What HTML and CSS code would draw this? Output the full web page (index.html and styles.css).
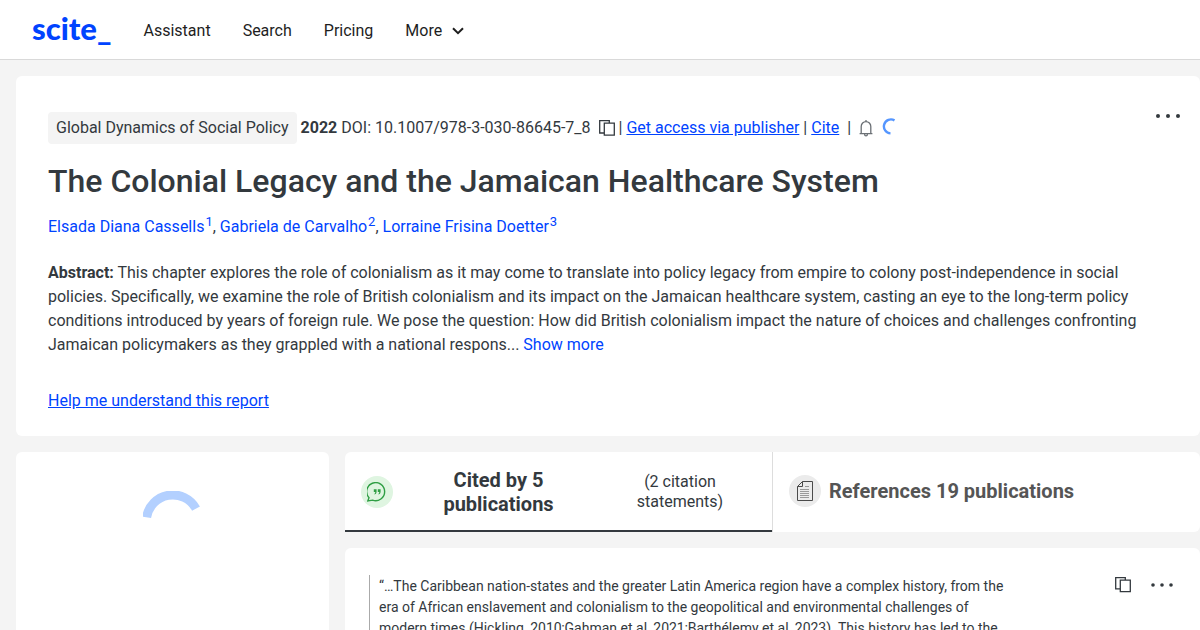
FILE: index.html
```html
<!DOCTYPE html>
<html lang="en">
<head>
  <meta charset="UTF-8" />
  <meta name="viewport" content="width=device-width, initial-scale=1.0"/>
  <title>The Colonial Legacy and the Jamaican Healthcare System</title>
  <link rel="stylesheet" href="styles.css">
</head>
<body>

  <!-- HEADER -->
  <header class="header">
    <a href="#" class="logo">scite_</a>
    <nav class="nav">
      <a href="#">Assistant</a>
      <a href="#">Search</a>
      <a href="#">Pricing</a>
      <button type="button" class="more">More
        <svg width="12" height="8" viewBox="0 0 12 8" fill="none" stroke="currentColor" stroke-width="2"><path d="M1 1.2l5 5 5-5"/></svg>
      </button>
    </nav>
  </header>

  <main class="main">

    <!-- PAPER -->
    <section class="card paper">
      <div class="meta">
        <span class="journal">Global Dynamics of Social Policy</span>
        <strong>2022</strong>
        <span>DOI: 10.1007/978-3-030-86645-7_8</span>
        <button type="button" class="icon-btn copy" aria-label="Copy DOI">
          <svg width="16" height="16" viewBox="0 0 16 16" fill="none" stroke="currentColor" stroke-width="1.3"><path d="M4.8 13H.7V.7h9.6V3M5.3 3.2h10v12h-10z"/></svg>
        </button>
        <span>|</span>
        <a href="#">Get access via publisher</a>
        <span>|</span>
        <a href="#">Cite</a>
        <span class="last-bar">|</span>
        <button type="button" class="icon-btn bell" aria-label="Notify me">
          <svg width="14" height="17" viewBox="0 0 14 17" fill="none" stroke="#6b7075" stroke-width="1.3"><path d="M7 0v1.6M.6 13.6h12.8M2.2 13.6V6.6a4.8 5 0 0 1 9.6 0v7M5.6 14.2a1.4 1.6 0 0 0 2.8 0"/></svg>
        </button>
        <svg class="spinner-small" width="16" height="20" viewBox="0 0 16 20" fill="none" stroke="#5596ff" stroke-width="2.4"><path d="M13.5 2.4A7 7 0 1 0 9.5 15.4"/></svg>
        <button type="button" class="icon-btn dots" aria-label="More options">
          <svg width="24" height="4" viewBox="0 0 24 4" fill="currentColor"><circle cx="2" cy="2" r="2"/><circle cx="12" cy="2" r="2"/><circle cx="22" cy="2" r="2"/></svg>
        </button>
      </div>
      <h1>The Colonial Legacy and the Jamaican Healthcare System</h1>
      <p class="authors"><a href="#">Elsada Diana Cassells<sup>1</sup></a>, <a href="#">Gabriela de Carvalho<sup>2</sup></a>, <a href="#">Lorraine Frisina Doetter<sup>3</sup></a></p>
      <p class="abstract"><strong>Abstract:</strong> This chapter explores the role of colonialism as it may come to translate into policy legacy from empire to colony post-independence in social policies. Specifically, we examine the role of British colonialism and its impact on the Jamaican healthcare system, casting an eye to the long-term policy conditions introduced by years of foreign rule. We pose the question: How did British colonialism impact the nature of choices and challenges confronting Jamaican policymakers as they grappled with a national respons... <button type="button" class="show-more">Show more</button></p>
      <a href="#" class="help">Help me understand this report</a>
    </section>

    <div class="columns">

      <!-- FILTERS (loading) -->
      <aside class="card sidebar">
        <svg width="60" height="60" viewBox="0 0 60 60" fill="none" stroke="#b3d0ff" stroke-width="9"><path d="M3.6 26.4A26.5 26.5 0 0 1 53 17.6"/></svg>
      </aside>

      <!-- CITATIONS -->
      <div class="results">
        <div class="card tabs">
          <button type="button" class="tab active">
            <span class="badge green">
              <svg width="20" height="20" viewBox="0 0 20 20" fill="none" stroke="#2f9e44" stroke-width="1.4"><path d="M.8 18.9l1.2-3.2A9 9 0 1 1 5.6 18.1L.8 18.9z"/><path fill="#2f9e44" stroke="none" d="M6.8 7.2h2.8v2.4c0 1.6-.7 2.5-1.9 3l-.3-.7c.6-.4.9-.9.9-1.8H6.8zM10.8 7.2h2.8v2.4c0 1.6-.7 2.5-1.9 3l-.3-.7c.6-.4.9-.9.9-1.8h-1.5z"/></svg>
            </span>
            <span class="tab-title">Cited by 5 publications</span>
            <span class="tab-note">(2 citation statements)</span>
          </button>
          <button type="button" class="tab">
            <span class="badge">
              <svg width="16" height="20" viewBox="0 0 16 20" fill="none" stroke="#4a4a4a"><path d="M5.5.5h10v19H.5v-14zM5.5.5v5h-5"/><path stroke="#999" d="M8 5.5h4M3 8.5h9M3 10.5h9M3 12.5h9M3 14.5h9M3 16.5h9"/></svg>
            </span>
            <span class="tab-title">References 19 publications</span>
          </button>
        </div>

        <article class="card citation">
          <blockquote>“…The Caribbean nation-states and the greater Latin America region have a complex history, from the era of African enslavement and colonialism to the geopolitical and environmental challenges of modern times (Hickling, 2010;Gahman et al, 2021;Barthélemy et al, 2023). This history has led to the</blockquote>
          <div class="actions">
            <button type="button" class="icon-btn" aria-label="Copy statement">
              <svg width="16" height="16" viewBox="0 0 16 16" fill="none" stroke="currentColor" stroke-width="1.3"><path d="M4.8 11.8H.7V.7h9.6V3M5.3 3.2h10v11.5h-10z"/></svg>
            </button>
            <button type="button" class="icon-btn" aria-label="More options">
              <svg width="22" height="4" viewBox="0 0 22 4" fill="currentColor"><circle cx="2" cy="2" r="1.8"/><circle cx="11" cy="2" r="1.8"/><circle cx="20" cy="2" r="1.8"/></svg>
            </button>
          </div>
        </article>
      </div>
    </div>
  </main>

</body>
</html>
```

FILE: styles.css
```css
* {
  box-sizing: border-box;
}

body {
  font-family: Roboto, "Liberation Sans", sans-serif;
  font-size: 16px;
  line-height: 24px;
  color: #33393e;
  background: #f4f4f4;
  display: flex;
  flex-direction: column;
  height: 100vh;
  margin: 0;
  overflow: hidden;
}

button {
  font: inherit;
  color: inherit;
  background: none;
  border: none;
  padding: 0;
  cursor: pointer;
}

a {
  color: #0043ff;
}

svg {
  display: block;
}

.header {
  display: flex;
  align-items: center;
  flex: none;
  gap: 32px;
  height: 60px;
  padding: 0 32px;
  background: #fff;
  border-bottom: 1px solid #d9d9d9;
}

.logo {
  font-family: Lato, sans-serif;
  font-size: 31px;
  font-weight: 900;
  padding-bottom: 4px;
  text-decoration: none;
}

.nav {
  display: flex;
  gap: 32px;
  padding-top: 2px;
  color: #1e1e1e;
}

.nav a {
  color: inherit;
  text-decoration: none;
}

.more {
  display: flex;
  align-items: center;
  gap: 10px;
}

.main {
  display: flex;
  flex-direction: column;
  flex: 1;
  gap: 16px;
  min-height: 0;
  padding: 16px 0 0 16px;
}

.card {
  background: #fff;
  border-radius: 6px;
}

.paper {
  flex: none;
  padding: 36px 20px 23px 32px;
}

.meta {
  display: flex;
  align-items: center;
  gap: 4px;
  height: 32px;
}

.journal {
  padding: 4px 8px;
  background: #f4f4f4;
  border-radius: 4px;
}

.icon-btn {
  flex: none;
}

.copy {
  margin-left: 4px;
}

.last-bar {
  margin: 0 4px;
}

.spinner-small {
  margin: 0 4px;
}

.dots {
  align-self: flex-start;
  margin-left: auto;
  padding-top: 2px;
}

h1 {
  font-size: 32px;
  font-weight: 500;
  line-height: 40px;
  margin: 17px 0 14px;
}

.authors {
  margin: 0;
}

.authors a {
  text-decoration: none;
}

sup {
  font-size: 13px;
  line-height: 0;
  margin-left: 1px;
}

.abstract {
  margin: 22px 32px 32px 0;
}

.show-more {
  color: #0043ff;
}

.help {
  display: block;
  width: fit-content;
}

.columns {
  display: flex;
  flex: 1;
  gap: 16px;
  min-height: 0;
}

.sidebar {
  flex: 0 0 313px;
  padding: 39px 0;
  border-radius: 6px 6px 0 0;
}

.sidebar svg {
  margin: 0 auto;
}

.results {
  display: flex;
  flex-direction: column;
  flex: 1;
  gap: 16px;
}

.tabs {
  display: flex;
  flex: none;
  height: 80px;
  border-bottom-left-radius: 0;
  overflow: hidden;
}

.tab {
  display: flex;
  align-items: center;
  flex: 1;
  gap: 8px;
  padding: 0 16px;
  color: #555;
}

.tab + .tab {
  padding-bottom: 2px;
  border-left: 1px solid #ddd;
}

.tab.active {
  padding-top: 2px;
  color: #33393e;
  border-bottom: 2px solid #33393e;
}

.badge {
  display: flex;
  align-items: center;
  justify-content: center;
  flex: none;
  width: 32px;
  height: 32px;
  background: #ebebeb;
  border-radius: 50%;
}

.badge.green {
  background: #dff5e1;
}

.tab-title {
  font-size: 20px;
  font-weight: 700;
}

.active .tab-title {
  flex: 1;
  padding: 0 32px;
}

.tab-note {
  line-height: 20px;
  width: 152px;
  padding: 0 24px;
}

.citation {
  display: flex;
  justify-content: space-between;
  flex: 1;
  padding: 27px 27px 0 24px;
  border-radius: 6px 6px 0 0;
}

blockquote {
  flex: 0 1 640px;
  font-size: 14px;
  line-height: 21px;
  margin: 0;
  padding: 1px 0 0 9px;
  border-left: 1px solid #aaa;
}

.actions {
  display: flex;
  align-items: center;
  gap: 20px;
  height: 20px;
}
```
